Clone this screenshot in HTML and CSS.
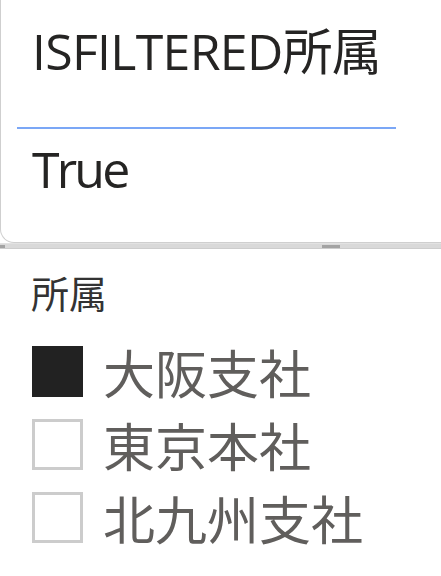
FILE: index.html
```html
<!DOCTYPE html>
<html lang="ja">
<head>
<meta charset="utf-8">
<link rel="stylesheet" href="styles.css">
</head>
<body>
<div class="card">
  <div class="card-title">ISFILTERED所属</div>
  <div class="card-divider"></div>
  <div class="card-value">True</div>
</div>
<div class="separator">
  <span class="grip grip-left"></span>
  <span class="grip grip-mid"></span>
</div>
<div class="slicer">
  <div class="slicer-title">所属</div>
  <ul class="options">
    <li class="option"><span class="box checked"></span><span class="label">大阪支社</span></li>
    <li class="option"><span class="box"></span><span class="label">東京本社</span></li>
    <li class="option"><span class="box"></span><span class="label">北九州支社</span></li>
  </ul>
</div>
</body>
</html>
```

FILE: styles.css
```css
html, body {
  margin: 0;
  padding: 0;
  background: #ffffff;
  overflow: hidden;
}
body {
  width: 441px;
  height: 576px;
  font-family: "Open Sans", "Noto Sans CJK JP", sans-serif;
}
.card {
  height: 243px;
  box-sizing: border-box;
  border-left: 1px solid #cfcfcf;
  border-bottom: 1px solid #cfcfcf;
  border-bottom-left-radius: 14px;
  padding-top: 17px;
  color: #252423;
}
.card-title {
  font-size: 50px;
  line-height: 68px;
  padding-left: 31px;
  letter-spacing: -0.7px;
  white-space: nowrap;
}
.card-title, .card-value {
  font-family: "Open Sans", "Noto Sans CJK JP", sans-serif;
}
.card-divider {
  margin-top: 42px;
  margin-left: 16px;
  width: 379px;
  height: 2px;
  background: #7ba7f6;
}
.card-value {
  margin-top: 6px;
  font-size: 50px;
  line-height: 68px;
  padding-left: 31px;
  letter-spacing: -2.8px;
}
.separator {
  position: relative;
  height: 6px;
  box-sizing: border-box;
  border-top: 1px solid #e2e2e2;
  background: #d9d9d9;
  border-bottom: 1px solid #cdcdcd;
}
.grip {
  position: absolute;
  top: 1px;
  height: 3px;
  background: #a3a3a3;
}
.grip-left { left: 0; width: 5px; }
.grip-mid { left: 322px; width: 18px; }
.slicer {
  padding-top: 24px;
  padding-left: 31px;
  font-family: "Noto Sans CJK JP", sans-serif;
}
.slicer-title {
  font-size: 38px;
  line-height: 38px;
  color: #333333;
}
.options {
  list-style: none;
  margin: 35px 0 0;
  padding: 0 0 0 1px;
  display: flex;
  flex-direction: column;
  gap: 22px;
}
.option {
  display: flex;
  align-items: center;
  height: 51px;
  gap: 20px;
}
.box {
  width: 51px;
  height: 51px;
  box-sizing: border-box;
  border: 3px solid #cccccc;
  background: #ffffff;
  flex: none;
}
.box.checked {
  background: #222222;
  border-color: #222222;
}
.label {
  font-size: 52px;
  line-height: 52px;
  padding-top: 1px;
  color: #605e5c;
  white-space: nowrap;
}
```
